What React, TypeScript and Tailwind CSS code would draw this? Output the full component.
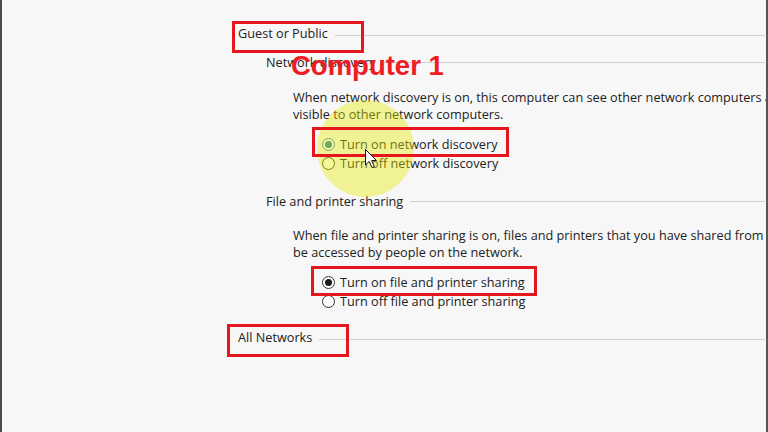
import React from 'react';

const font = { fontFamily: '"Open Sans", "Noto Sans", sans-serif' };

const Radio: React.FC<{ checked?: boolean; hover?: boolean; label: string }> = ({ checked, hover, label }) => (
  <div className="flex items-center h-[19px] pl-[29px] gap-[5px] whitespace-nowrap">
    <span
      className={
        'w-[13px] h-[13px] rounded-full border flex items-center justify-center bg-white ' +
        (hover ? 'border-[#2d7dc9]' : 'border-[#333]')
      }
    >
      {checked && (
        <span className={'w-[7px] h-[7px] rounded-full ' + (hover ? 'bg-[#1a7a9a]' : 'bg-[#1a1a1a]')} />
      )}
    </span>
    <span>{label}</span>
  </div>
);

const Heading: React.FC<{ label: string; sub?: boolean }> = ({ label, sub }) => (
  <div className={'flex items-center h-[17px] gap-[7px] whitespace-nowrap ' + (sub ? 'pl-[28px]' : '')}>
    <span>{label}</span>
    <div className={'flex-1 h-px bg-[#cfcfcf] ' + (sub ? '' : 'translate-y-[2px]')} />
  </div>
);

export default function App() {
  return (
    <div
      className="relative w-[768px] h-[432px] overflow-hidden bg-[#f7f7f7] text-[#222] text-[12.7px]"
      style={font}
    >
      {/* window edges */}
      <div className="absolute left-0 top-0 bottom-0 w-[2px] bg-[#4a4a4a]" />
      <div className="absolute right-0 top-0 bottom-0 w-[2px] bg-[#555]" />

      {/* settings content */}
      <div className="flex flex-col pl-[238px] pr-[3px] pt-[25px]">
        <Heading label="Guest or Public" />
        <div className="mt-[12px]">
          <Heading label="Network discovery" sub />
        </div>
        <div className="mt-[18px] pl-[55px] leading-[17px] whitespace-nowrap">
          <div>When network discovery is on, this computer can see other network computers and devices and is</div>
          <div>visible to other network computers.</div>
        </div>
        <div className="mt-[12px] pl-[55px]">
          <Radio checked hover label="Turn on network discovery" />
          <Radio label="Turn off network discovery" />
        </div>
        <div className="mt-[20px]">
          <Heading label="File and printer sharing" sub />
        </div>
        <div className="mt-[17px] pl-[55px] leading-[17px] whitespace-nowrap">
          <div>When file and printer sharing is on, files and printers that you have shared from this computer can</div>
          <div>be accessed by people on the network.</div>
        </div>
        <div className="mt-[12px] pl-[55px]">
          <Radio checked label="Turn on file and printer sharing" />
          <Radio label="Turn off file and printer sharing" />
        </div>
        <div className="mt-[18px]">
          <Heading label="All Networks" />
        </div>
      </div>

      {/* cursor highlight */}
      <div className="absolute left-[317px] top-[100px] w-[97px] h-[97px] rounded-full bg-[rgba(230,235,0,0.4)]" />

      {/* annotation boxes */}
      <div className="absolute left-[232px] top-[21px] w-[132px] h-[32px] border-[3px] border-[#e5161e]" />
      <div className="absolute left-[312px] top-[127px] w-[197px] h-[30px] border-[3px] border-[#e5161e]" />
      <div className="absolute left-[311px] top-[266px] w-[226px] h-[30px] border-[3px] border-[#e5161e]" />
      <div className="absolute left-[227px] top-[324px] w-[122px] h-[33px] border-[3px] border-[#e5161e]" />

      <div
        className="absolute left-[291px] top-[52px] text-[27.5px] leading-[27px] font-bold text-[#ee1c24] whitespace-nowrap"
        style={{ fontFamily: '"Liberation Sans", Arial, sans-serif' }}
      >
        Computer 1
      </div>

      {/* mouse pointer */}
      <svg className="absolute left-[365px] top-[149px]" width="13" height="20" viewBox="0 0 13 20">
        <path
          d="M0.5 0.5 L0.5 16 L4.2 12.4 L7 18.6 L9.4 17.6 L6.7 11.5 L11.5 11.5 Z"
          fill="#fff"
          stroke="#111"
          strokeWidth="1"
          strokeLinejoin="round"
        />
      </svg>
    </div>
  );
}
